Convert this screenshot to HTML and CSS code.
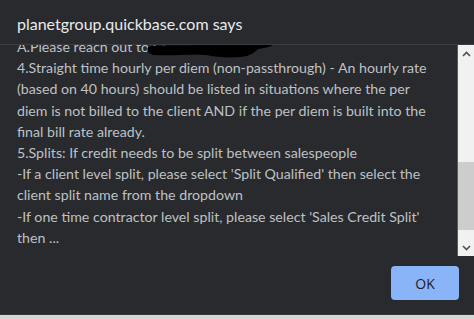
FILE: index.html
```html
<!DOCTYPE html>
<html>
<head>
<meta charset="utf-8">
<link rel="stylesheet" href="styles.css">
</head>
<body>
<div class="dialog">
  <div class="title">planetgroup.quickbase.com says</div>
  <div class="msgbox">
    <div class="viewport">
      <div class="content">
        <div class="line">A.Please reach out to Sa...</div>
        <div class="line">4.Straight time hourly per diem (non-passthrough) - An hourly rate</div>
        <div class="line">(based on 40 hours) should be listed in situations where the per</div>
        <div class="line">diem is not billed to the client AND if the per diem is built into the</div>
        <div class="line">final bill rate already.</div>
        <div class="line">5.Splits: If credit needs to be split between salespeople</div>
        <div class="line">-If a client level split, please select 'Split Qualified' then select the</div>
        <div class="line">client split name from the dropdown</div>
        <div class="line">-If one time contractor level split, please select 'Sales Credit Split'</div>
        <div class="line">then ...</div>
      </div>
      <svg class="redact" width="130" height="24" viewBox="0 0 130 24">
        <path d="M2 10 C10 7 30 9 50 8 C60 7 62 4 72 3 C85 1 100 2 104 5 C112 6 122 6 128 7 C126 10 118 11 112 12 C108 16 104 19 95 20 C80 21 70 20 60 18 C45 17 25 19 8 18 C3 17 0 14 2 10 Z" fill="#000"/>
      </svg>
    </div>
    <div class="scrollbar">
      <div class="arrow">
        <svg width="9" height="6" viewBox="0 0 9 6"><path d="M1 5 L4.5 1.5 L8 5" fill="none" stroke="#505050" stroke-width="1.6"/></svg>
      </div>
      <div class="track">
        <div class="thumb"></div>
      </div>
      <div class="arrow">
        <svg width="9" height="6" viewBox="0 0 9 6"><path d="M1 1 L4.5 4.5 L8 1" fill="none" stroke="#505050" stroke-width="1.6"/></svg>
      </div>
    </div>
  </div>
  <div class="footer">
    <button class="ok">OK</button>
  </div>
</div>
</body>
</html>
```
FILE: styles.css
```css
html, body {
  margin: 0;
  padding: 0;
}
body {
  background: #d6d6d6;
  width: 474px;
  height: 319px;
  overflow: hidden;
  font-family: "Lato", "Open Sans", sans-serif;
}
.dialog {
  background: #292a2d;
  height: 314px;
  border-bottom: 1px solid #3a3b3e;
  display: flex;
  flex-direction: column;
}
.title {
  height: 44px;
  box-sizing: border-box;
  padding: 12px 0 0 17px;
  font-size: 16px;
  line-height: 24px;
  color: #e8eaed;
}
.msgbox {
  display: flex;
  height: 211px;
  border-top: 1px solid #3c3d41;
}
.viewport {
  flex: 1;
  position: relative;
  overflow: hidden;
}
.content {
  margin-top: -9px;
  padding-left: 17px;
  color: #bdc1c6;
  font-size: 14.2px;
  line-height: 21.2px;
  white-space: nowrap;
}
.redact {
  position: absolute;
  left: 146px;
  top: -8px;
}
.scrollbar {
  width: 16px;
  background: #f1f1f1;
  border-left: 1px solid #5a5a5a;
  display: flex;
  flex-direction: column;
}
.arrow {
  height: 17px;
  display: flex;
  align-items: center;
  justify-content: center;
}
.track {
  flex: 1;
  position: relative;
}
.thumb {
  position: absolute;
  left: 0;
  right: 0;
  top: 100px;
  height: 68px;
  background: #cdcdcd;
}
.footer {
  display: flex;
  justify-content: flex-end;
  padding: 10px 15px 0 0;
}
.ok {
  width: 68px;
  height: 34px;
  border: none;
  border-radius: 4px;
  background: #8ab4f8;
  color: #202124;
  font-family: "Open Sans", "Noto Sans", sans-serif;
  font-size: 14px;
  padding: 0;
}
```
